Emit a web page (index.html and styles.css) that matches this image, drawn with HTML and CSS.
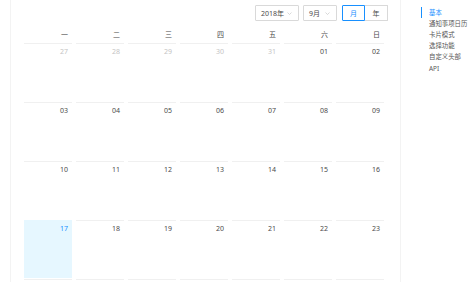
FILE: index.html
```html
<!DOCTYPE html>
<html lang="zh-CN">
<head>
    <meta charset="UTF-8">
    <meta name="viewport" content="width=device-width, initial-scale=1.0">
    <title>Calendar</title>
    <link rel="stylesheet" href="styles.css">
</head>
<body>
    <div class="page">
        <div class="main">
            <div class="calendar">
                <div class="cal-header">
                    <div class="select year-select">
                        <span>2018年</span>
                        <svg class="arrow" viewBox="0 0 10 6" width="5" height="3"><path d="M1 1 L5 5 L9 1" fill="none" stroke="#bfbfbf" stroke-width="1.2"/></svg>
                    </div>
                    <div class="select month-select">
                        <span>9月</span>
                        <svg class="arrow" viewBox="0 0 10 6" width="5" height="3"><path d="M1 1 L5 5 L9 1" fill="none" stroke="#bfbfbf" stroke-width="1.2"/></svg>
                    </div>
                    <div class="radio-group">
                        <span class="radio checked">月</span>
                        <span class="radio">年</span>
                    </div>
                </div>
                <div class="week-row">
                    <span>一</span><span>二</span><span>三</span><span>四</span><span>五</span><span>六</span><span>日</span>
                </div>
                <div class="days">
                    <div class="cell other">27</div>
                    <div class="cell other">28</div>
                    <div class="cell other">29</div>
                    <div class="cell other">30</div>
                    <div class="cell other">31</div>
                    <div class="cell">01</div>
                    <div class="cell">02</div>

                    <div class="cell">03</div>
                    <div class="cell">04</div>
                    <div class="cell">05</div>
                    <div class="cell">06</div>
                    <div class="cell">07</div>
                    <div class="cell">08</div>
                    <div class="cell">09</div>

                    <div class="cell">10</div>
                    <div class="cell">11</div>
                    <div class="cell">12</div>
                    <div class="cell">13</div>
                    <div class="cell">14</div>
                    <div class="cell">15</div>
                    <div class="cell">16</div>

                    <div class="cell selected">17</div>
                    <div class="cell">18</div>
                    <div class="cell">19</div>
                    <div class="cell">20</div>
                    <div class="cell">21</div>
                    <div class="cell">22</div>
                    <div class="cell">23</div>

                    <!-- 下一行只露出边框 -->
                    <div class="cell"></div>
                    <div class="cell"></div>
                    <div class="cell"></div>
                    <div class="cell"></div>
                    <div class="cell"></div>
                    <div class="cell"></div>
                    <div class="cell"></div>
                </div>
            </div>
        </div>
        <div class="side">
            <ul class="anchor">
                <li class="active"><a href="javascript:;">基本</a></li>
                <li><a href="javascript:;">通知事项日历</a></li>
                <li><a href="javascript:;">卡片模式</a></li>
                <li><a href="javascript:;">选择功能</a></li>
                <li><a href="javascript:;">自定义头部</a></li>
                <li><a href="javascript:;">API</a></li>
            </ul>
        </div>
    </div>
</body>
</html>
```

FILE: styles.css
```css
*{
    margin: 0;
    padding: 0;
    box-sizing: border-box;
}
html, body{
    overflow: hidden;
}
body{
    font-family: "Noto Sans", "Noto Sans CJK SC", sans-serif;
    color: #4a4a4a;
    background-color: #fff;
}
ul{
    list-style: none;
}
a{
    text-decoration: none;
    color: inherit;
}
.page{
    display: flex;
    height: 282px;
}
.main{
    margin-left: 10px;
    width: 391px;
    height: 282px;
    border-left: 1px solid #f3f3f3;
    border-right: 1px solid #f3f3f3;
    padding-left: 11px;
}
.calendar{
    width: 366px;
}
.cal-header{
    display: flex;
    justify-content: flex-end;
    padding: 5px 0 0;
    height: 27px;
}
.select{
    display: flex;
    align-items: center;
    justify-content: space-between;
    height: 16px;
    border: 1px solid #d9d9d9;
    border-radius: 1px;
    font-size: 7px;
    padding: 0 6px 0 5px;
    margin-left: 4px;
}
.year-select{
    width: 44px;
}
.month-select{
    width: 34px;
}
.arrow{
    display: block;
}
.radio-group{
    display: flex;
    margin-left: 5px;
}
.radio{
    display: flex;
    align-items: center;
    justify-content: center;
    width: 23px;
    height: 16px;
    font-size: 7px;
    border: 1px solid #d9d9d9;
}
.radio + .radio{
    border-left: none;
    border-radius: 0 1px 1px 0;
}
.radio.checked{
    border-color: #1890ff;
    color: #1890ff;
    border-radius: 1px 0 0 1px;
}
.week-row{
    display: grid;
    grid-template-columns: repeat(7, 52px);
    height: 16px;
    font-size: 7px;
    line-height: 16px;
}
.week-row span{
    text-align: right;
    padding-right: 6px;
}
.days{
    display: grid;
    grid-template-columns: repeat(7, 52px);
    row-gap: 1px;
}
.cell{
    height: 58px;
    margin: 0 2px;
    border-top: 1px solid #f0f0f0;
    padding: 2px 4px 0;
    text-align: right;
    font-size: 7px;
    line-height: 12px;
}
.cell.other{
    color: #c4c4c4;
}
.cell.selected{
    background-color: #e6f7ff;
    border-top-color: #e6f7ff;
    color: #1890ff;
}
.side{
    padding: 7px 0 0 20px;
}
.anchor li{
    font-size: 6.4px;
    line-height: 8px;
    padding: 1.6px 0 1.6px 7px;
    border-left: 1px solid transparent;
    color: #555;
}
.anchor li.active{
    border-left-color: #1890ff;
    color: #1890ff;
}
```
